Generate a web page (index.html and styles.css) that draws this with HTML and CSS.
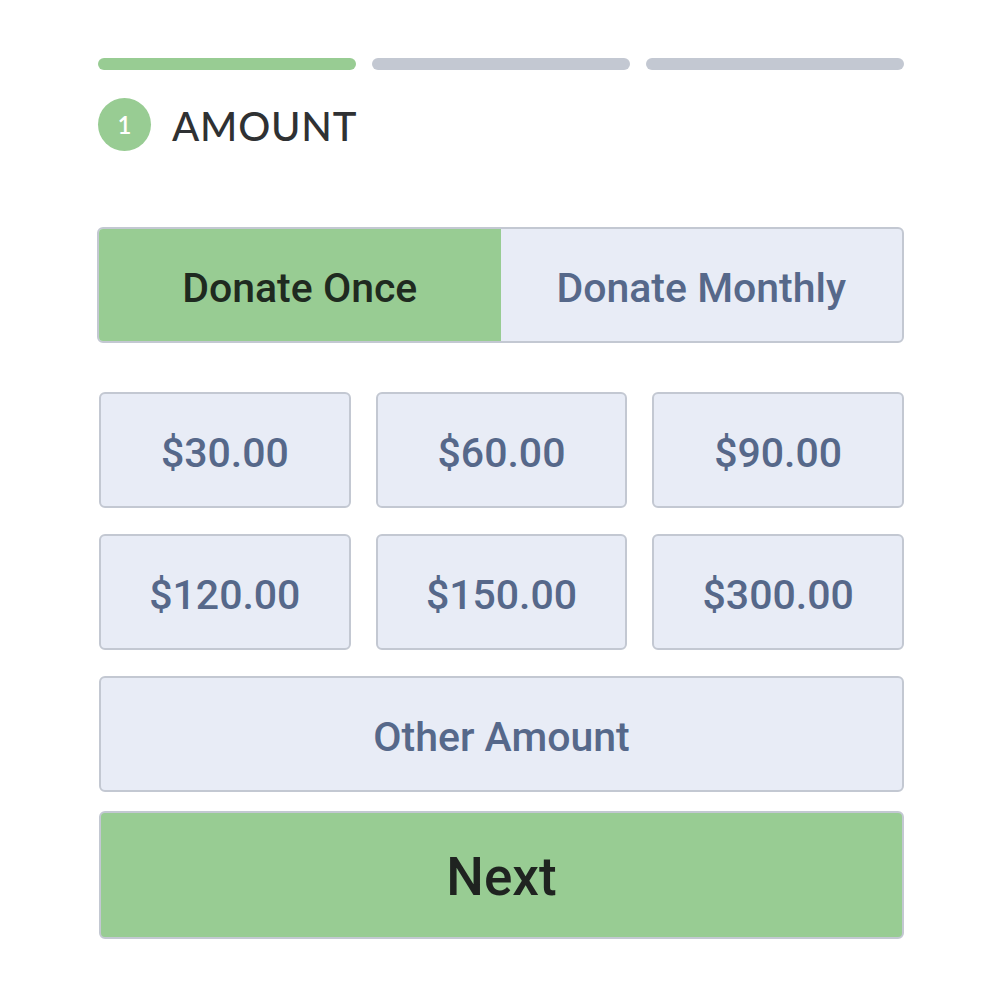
FILE: index.html
```html
<!DOCTYPE html>
<html>
<head>
<meta charset="utf-8">
<link rel="stylesheet" href="styles.css">
</head>
<body>
<div class="form">
  <div class="progress">
    <div class="bar active"></div>
    <div class="bar"></div>
    <div class="bar"></div>
  </div>
  <div class="step">
    <div class="num">1</div>
    <div class="title">AMOUNT</div>
  </div>
  <div class="toggle">
    <div class="opt selected">Donate Once</div>
    <div class="opt">Donate Monthly</div>
  </div>
  <div class="amounts">
    <div class="amt">$30.00</div>
    <div class="amt">$60.00</div>
    <div class="amt">$90.00</div>
    <div class="amt">$120.00</div>
    <div class="amt">$150.00</div>
    <div class="amt">$300.00</div>
    <div class="amt other">Other Amount</div>
  </div>
  <div class="next">Next</div>
</div>
</body>
</html>
```
FILE: styles.css
```css
html, body {
  margin: 0;
  padding: 0;
  background: #ffffff;
}
.form {
  width: 807px;
  margin-left: 97px;
  padding-top: 58px;
  font-family: Roboto, "Liberation Sans", sans-serif;
}
.progress {
  display: flex;
  gap: 16px;
  padding: 0 0 0 1px;
}
.bar {
  flex: 1;
  height: 12px;
  border-radius: 6px;
  background: #c3c8d2;
}
.bar.active {
  background: #98cc93;
}
.step {
  display: flex;
  align-items: center;
  gap: 21px;
  margin-top: 28px;
  padding-left: 1px;
}
.num {
  width: 53px;
  height: 53px;
  border-radius: 50%;
  background: #98cc93;
  color: #ffffff;
  font-family: Lato, sans-serif;
  font-size: 24px;
  font-weight: 600;
  display: flex;
  align-items: center;
  justify-content: center;
}
.title {
  font-family: Lato, sans-serif;
  font-size: 40px;
  font-weight: 500;
  color: #2f3133;
  letter-spacing: 0.8px;
  padding-top: 2px;
}
.toggle {
  display: flex;
  margin-top: 76px;
  height: 116px;
  border: 2px solid #c3c8d2;
  border-radius: 6px;
  box-sizing: border-box;
  overflow: hidden;
  background: #e8ecf6;
}
.opt {
  flex: 1;
  display: flex;
  align-items: center;
  justify-content: center;
  padding-top: 6px;
  font-size: 41px;
  font-weight: 500;
  color: #56688a;
}
.opt.selected {
  background: #98cc93;
  color: #1f2a20;
}
.amounts {
  display: grid;
  grid-template-columns: repeat(3, 1fr);
  column-gap: 25px;
  row-gap: 26px;
  margin: 49px 0 0 2px;
}
.amt {
  height: 116px;
  box-sizing: border-box;
  border: 2px solid #c3c8d2;
  border-radius: 6px;
  background: #e8ecf6;
  display: flex;
  align-items: center;
  justify-content: center;
  padding-top: 6px;
  font-size: 41px;
  font-weight: 500;
  color: #56688a;
}
.amt.other {
  grid-column: 1 / 4;
}
.next {
  margin: 19px 0 0 2px;
  height: 128px;
  box-sizing: border-box;
  border: 2px solid #c3c8d2;
  border-radius: 6px;
  background: #98cc93;
  display: flex;
  align-items: center;
  justify-content: center;
  padding-top: 4px;
  font-size: 53px;
  font-weight: 500;
  color: #1f2320;
}
```
